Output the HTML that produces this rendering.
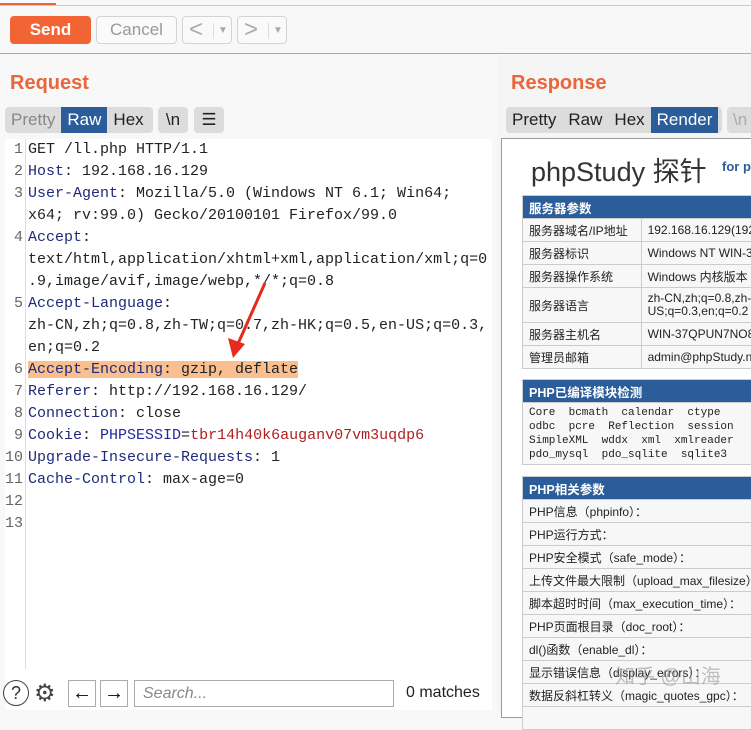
<!DOCTYPE html>
<html><head><meta charset="utf-8"><style>
*{margin:0;padding:0;box-sizing:border-box}
body{width:751px;height:710px;overflow:hidden;background:#f8f8f8;font-family:"Liberation Sans","Noto Sans CJK SC",sans-serif;position:relative}
.abs{position:absolute}
.btn{position:absolute;top:16px;height:28px;border:1px solid #d4d4d4;border-radius:4px;background:#fafafa;color:#999;font-size:17px;text-align:center;line-height:26px}
.title{position:absolute;top:72px;font-size:20px;font-weight:bold;color:#e8663a}
.tabs{position:absolute;top:107px;height:26px;background:#dcdcdc;border-radius:4px;display:flex;font-size:17px;line-height:26px}
.tabs span{padding:0 6px;color:#222}
.tabs .on{background:#2a5d99;color:#fff}
.ed{position:absolute;left:5px;top:139px;width:487px;height:571px;background:#fff}
.ln{position:absolute;left:0;width:18px;text-align:right;font:15px/22px "Liberation Mono",monospace;color:#666}
.code{position:absolute;left:28px;top:139px;font:15px/22px "Liberation Mono","Noto Sans CJK SC",monospace;color:#222;white-space:pre}
.k{color:#1f2a7a}.v{color:#b02020}
.hl{background:#f9bf8f}
table{border-collapse:collapse;position:absolute;left:522px;font-size:12px;color:#222;background:#f7f7f7}
td{border:1px solid #ccc;padding:0 6px;height:23px;white-space:nowrap;overflow:hidden}
.th{background:#2a5d99;color:#fff;font-weight:bold;height:23px;font-size:12.5px}
.nav{position:absolute;top:16px;width:50px;height:28px;border:1px solid #d4d4d4;border-radius:4px;background:#fafafa;color:#aaa}
.nav .a{position:absolute;left:6px;top:-1px;font-size:24px;line-height:28px}
.nav .d{position:absolute;left:30px;top:6px;height:16px;border-left:1px solid #ddd;padding-left:4px;font-size:10px;line-height:16px}
</style></head><body>
<div class="abs" style="left:0;top:5px;width:751px;height:1px;background:#ccc"></div>
<div class="abs" style="left:0;top:3px;width:56px;height:2px;background:#e8663a"></div>
<div class="btn" style="left:10px;width:81px;background:#f26433;border-color:#f26433;color:#fff;font-weight:bold">Send</div>
<div class="btn" style="left:96px;width:81px">Cancel</div>
<div class="nav" style="left:182px"><span class="a">&lt;</span><span class="d">▼</span></div>
<div class="nav" style="left:237px"><span class="a">&gt;</span><span class="d">▼</span></div>
<div class="abs" style="left:0;top:53px;width:751px;height:1px;background:#aaa"></div>

<div class="title" style="left:10px">Request</div>
<div class="tabs" style="left:5px;width:148px"><span style="color:#888">Pretty</span><span class="on">Raw</span><span>Hex</span></div>
<div class="tabs" style="left:158px;width:30px;justify-content:center"><span>\n</span></div>
<div class="tabs" style="left:194px;width:30px;justify-content:center"><span>☰</span></div>
<div class="ed">
<div class="abs" style="left:20px;top:0;width:1px;height:530px;background:#ddd"></div>
<div class="ln" style="top:0">1<br>2<br>3<br><br>4<br><br><br>5<br><br><br>6<br>7<br>8<br>9<br>10<br>11<br>12<br>13</div>
</div>
<div class="code">GET /ll.php HTTP/1.1
<span class="k">Host</span>: 192.168.16.129
<span class="k">User-Agent</span>: Mozilla/5.0 (Windows NT 6.1; Win64;
x64; rv:99.0) Gecko/20100101 Firefox/99.0
<span class="k">Accept</span>:
text/html,application/xhtml+xml,application/xml;q=0
.9,image/avif,image/webp,*/*;q=0.8
<span class="k">Accept-Language</span>:
zh-CN,zh;q=0.8,zh-TW;q=0.7,zh-HK;q=0.5,en-US;q=0.3,
en;q=0.2
<span class="hl"><span class="k">Accept-Encoding</span>: gzip, deflate</span>
<span class="k">Referer</span>: http://192.168.16.129/
<span class="k">Connection</span>: close
<span class="k">Cookie</span>: <span style="color:#1f2aa0">PHPSESSID</span>=<span class="v">tbr14h40k6auganv07vm3uqdp6</span>
<span class="k">Upgrade-Insecure-Requests</span>: 1
<span class="k">Cache-Control</span>: max-age=0</div>
<svg class="abs" style="left:225px;top:278px" width="50" height="85"><line x1="40" y1="5" x2="12" y2="68" stroke="#e52a1e" stroke-width="3"/><polygon points="8,80 3,60 20,66" fill="#e52a1e"/></svg>

<div class="abs" style="left:3px;top:680px;width:26px;height:26px;border:1.5px solid #444;border-radius:50%;text-align:center;font-size:18px;line-height:24px;color:#333">?</div>
<div class="abs" style="left:34px;top:679px;font-size:24px;color:#444">⚙</div>
<div class="abs" style="left:68px;top:680px;width:28px;height:27px;border:1px solid #aaa;text-align:center;font-size:20px;line-height:25px">←</div>
<div class="abs" style="left:100px;top:680px;width:28px;height:27px;border:1px solid #aaa;text-align:center;font-size:20px;line-height:25px">→</div>
<div class="abs" style="left:134px;top:680px;width:260px;height:27px;border:1px solid #aaa;background:#fff;font-style:italic;color:#888;font-size:16px;line-height:25px;padding-left:8px">Search...</div>
<div class="abs" style="left:406px;top:684px;font-size:16px;color:#222">0 matches</div>

<div class="abs" style="left:497px;top:55px;width:254px;height:655px;background:#f5f5f5"></div>
<div class="abs" style="left:497px;top:372px;color:#aaa;font-size:12px">⋮</div>
<div class="title" style="left:511px">Response</div>
<div class="tabs" style="left:506px;width:216px"><span>Pretty</span><span>Raw</span><span>Hex</span><span class="on">Render</span></div>
<div class="tabs" style="left:727px;width:40px;color:#aaa"><span style="color:#aaa">\n</span></div>
<div class="abs" style="left:501px;top:138px;width:260px;height:580px;background:#fff;border:1px solid #999"></div>
<div class="abs" style="left:531px;top:150px;font-size:27px;color:#333">phpStudy 探针</div>
<div class="abs" style="left:722px;top:159px;font-size:13px;color:#2a5d99;font-weight:bold">for p</div>
<table style="top:195px;width:240px"><tr><td class="th" colspan="2">服务器参数</td></tr>
<tr><td style="width:119px">服务器域名/IP地址</td><td>192.168.16.129(192</td></tr>
<tr><td>服务器标识</td><td>Windows NT WIN-3</td></tr>
<tr><td>服务器操作系统</td><td>Windows 内核版本</td></tr>
<tr><td style="height:35px">服务器语言</td><td style="line-height:13px">zh-CN,zh;q=0.8,zh-<br>US;q=0.3,en;q=0.2</td></tr>
<tr><td>服务器主机名</td><td>WIN-37QPUN7NO8</td></tr>
<tr><td>管理员邮箱</td><td>admin@phpStudy.n</td></tr></table>
<table style="top:379px;width:240px"><tr><td class="th">PHP已编译模块检测</td></tr>
<tr><td style="height:62px;font:11px/14px 'Liberation Mono',monospace;white-space:pre">Core  bcmath  calendar  ctype
odbc  pcre  Reflection  session
SimpleXML  wddx  xml  xmlreader
pdo_mysql  pdo_sqlite  sqlite3</td></tr></table>
<table style="top:476px;width:240px"><tr><td class="th">PHP相关参数</td></tr>
<tr><td>PHP信息（phpinfo）：</td></tr>
<tr><td>PHP运行方式：</td></tr>
<tr><td>PHP安全模式（safe_mode）：</td></tr>
<tr><td>上传文件最大限制（upload_max_filesize）</td></tr>
<tr><td>脚本超时时间（max_execution_time）：</td></tr>
<tr><td>PHP页面根目录（doc_root）：</td></tr>
<tr><td>dl()函数（enable_dl）：</td></tr>
<tr><td>显示错误信息（display_errors）：</td></tr>
<tr><td>数据反斜杠转义（magic_quotes_gpc）：</td></tr>
<tr><td></td></tr></table>
<div class="abs" style="left:615px;top:660px;font-size:20px;color:rgba(150,150,150,.6)">知乎 @山海</div>
</body></html>
